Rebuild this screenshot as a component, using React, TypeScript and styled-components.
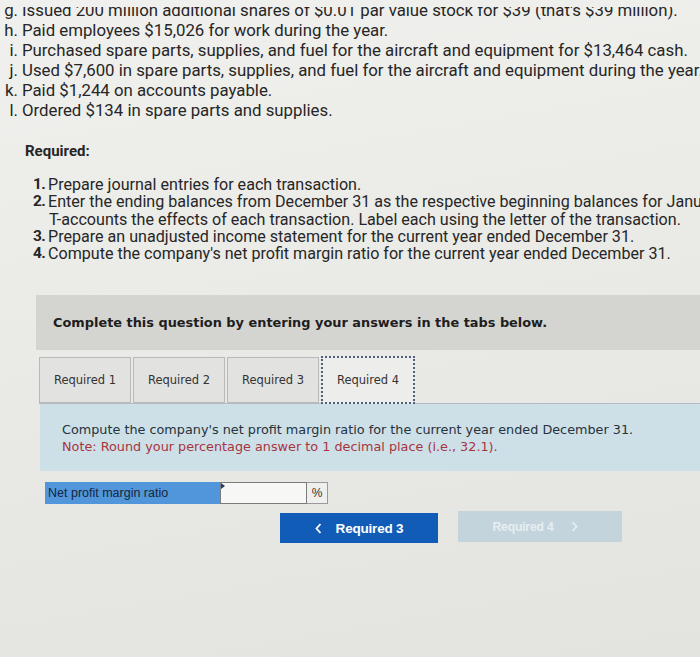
import React from "react";
import styled, { createGlobalStyle } from "styled-components";

const Global = createGlobalStyle`
  html, body { margin: 0; padding: 0; }
  body {
    width: 700px;
    height: 657px;
    overflow: hidden;
    background: linear-gradient(170deg, #f0f0ee 0%, #eaeae6 45%, #e3e3df 100%);
    font-family: Roboto, "Liberation Sans", sans-serif;
    color: #262626;
  }
`;

const Page = styled.div`
  display: flex;
  flex-direction: column;
  width: 700px;
  height: 657px;
  overflow: hidden;
`;

const Clip = styled.div`
  margin-top: 7px;
  overflow: hidden;
`;

const Transactions = styled.div`
  margin-top: -7px;
  display: flex;
  flex-direction: column;
  font-size: 16.8px;
  line-height: 20px;
  white-space: nowrap;
`;

const TLine = styled.div`
  display: flex;
`;

const TMark = styled.span`
  width: 18px;
  text-align: right;
  margin-right: 4px;
  flex: none;
`;

const Heading = styled.div`
  margin: 21px 0 0 25px;
  font-weight: 700;
  font-size: 15px;
  line-height: 20px;
`;

const Steps = styled.div`
  margin: 15px 0 0 33px;
  display: flex;
  flex-direction: column;
  font-size: 16.1px;
  line-height: 17.3px;
  white-space: nowrap;
`;

const Step = styled.div`
  display: flex;
`;

const StepMark = styled.span`
  width: 15px;
  font-weight: 700;
  font-size: 15.5px;
  letter-spacing: -0.6px;
  flex: none;
`;

const StepText = styled.span`
  display: flex;
  flex-direction: column;
`;

const Cont = styled.span`
  padding-left: 1px;
`;

const Banner = styled.div`
  margin: 33px 0 0 36px;
  height: 55px;
  background: #d4d4d1;
  display: flex;
  align-items: center;
  padding-left: 17px;
  font-family: "DejaVu Sans", Verdana, sans-serif;
  font-weight: 700;
  font-size: 12.9px;
  color: #1e1e1e;
`;

const TabRow = styled.div`
  margin: 5px 0 0 39px;
  display: flex;
  align-items: flex-end;
  height: 48px;
  border-bottom: 1px solid #b4bcc2;
`;

const Tab = styled.div<{ $active?: boolean }>`
  width: ${(p) => (p.$active ? 94 : 92)}px;
  height: ${(p) => (p.$active ? 48 : 46)}px;
  box-sizing: border-box;
  margin-right: 2px;
  display: flex;
  align-items: center;
  justify-content: center;
  font-family: "DejaVu Sans", Verdana, sans-serif;
  font-size: 11.5px;
  color: #333;
  background: ${(p) => (p.$active ? "#ededeb" : "#e2e2e0")};
  border: ${(p) => (p.$active ? "2px dotted #51607a" : "1px solid #b9b9b9")};
  margin-bottom: ${(p) => (p.$active ? -1 : 0)}px;
`;

const Panel = styled.div`
  margin-left: 40px;
  height: 67px;
  background: #cde0e8;
  padding: 18px 0 0 22px;
  box-sizing: border-box;
  font-family: "DejaVu Sans", Verdana, sans-serif;
  font-size: 12.8px;
  line-height: 16.5px;
  color: #26323c;
  white-space: nowrap;
`;

const Note = styled.div`
  color: #a8343f;
`;

const AnswerRow = styled.div`
  margin: 11px 0 0 45px;
  display: flex;
  height: 22px;
`;

const AnswerLabel = styled.div`
  width: 175px;
  background: #5196db;
  display: flex;
  align-items: center;
  padding-left: 3px;
  box-sizing: border-box;
  font-family: "Liberation Sans", Arial, sans-serif;
  font-size: 12.5px;
  color: #15263c;
`;

const AnswerInput = styled.div`
  position: relative;
  width: 87px;
  background: #f7f7f6;
  border: 1px solid #7b7b7b;
  box-sizing: border-box;
`;

const Caret = styled.span`
  position: absolute;
  left: 0;
  top: 0;
  width: 0;
  height: 0;
  border-top: 3px solid transparent;
  border-bottom: 3px solid transparent;
  border-left: 4px solid #1f3d6a;
`;

const Unit = styled.div`
  width: 21px;
  background: #efefed;
  border: 1px solid #9a9a9a;
  border-left: none;
  box-sizing: border-box;
  display: flex;
  align-items: center;
  justify-content: center;
  font-family: "Liberation Sans", Arial, sans-serif;
  font-size: 12px;
  color: #333;
`;

const NavRow = styled.div`
  margin: 9px 0 0 280px;
  display: flex;
  align-items: flex-start;
  gap: 20px;
`;

const NavButton = styled.div<{ $disabled?: boolean }>`
  width: ${(p) => (p.$disabled ? 164 : 158)}px;
  height: ${(p) => (p.$disabled ? 31 : 30)}px;
  margin-top: ${(p) => (p.$disabled ? -2 : 0)}px;
  background: ${(p) => (p.$disabled ? "#c3d4dd" : "#105cb6")};
  color: ${(p) => (p.$disabled ? "#e6eef2" : "#ffffff")};
  display: flex;
  align-items: center;
  justify-content: center;
  gap: ${(p) => (p.$disabled ? 17 : 14)}px;
  padding-right: ${(p) => (p.$disabled ? 10 : 0)}px;
  box-sizing: border-box;
  font-family: "Liberation Sans", Arial, sans-serif;
  font-weight: 700;
  font-size: ${(p) => (p.$disabled ? 12.2 : 13.5)}px;
  letter-spacing: -0.2px;
`;

const Chevron = ({ dir }: { dir: "left" | "right" }) => (
  <svg width="7" height="11" viewBox="0 0 7 11">
    <path
      d={dir === "left" ? "M5.5 1 L1.5 5.5 L5.5 10" : "M1.5 1 L5.5 5.5 L1.5 10"}
      stroke="currentColor"
      strokeWidth="1.8"
      fill="none"
    />
  </svg>
);

const transactions = [
  ["g.", "Issued 200 million additional shares of $0.01 par value stock for $39 (that's $39 million)."],
  ["h.", "Paid employees $15,026 for work during the year."],
  ["i.", "Purchased spare parts, supplies, and fuel for the aircraft and equipment for $13,464 cash."],
  ["j.", "Used $7,600 in spare parts, supplies, and fuel for the aircraft and equipment during the year."],
  ["k.", "Paid $1,244 on accounts payable."],
  ["l.", "Ordered $134 in spare parts and supplies."],
];

export default function App() {
  return (
    <Page>
      <Global />
      <Clip>
        <Transactions>
          {transactions.map(([m, t]) => (
            <TLine key={m}>
              <TMark>{m}</TMark>
              <span>{t}</span>
            </TLine>
          ))}
        </Transactions>
      </Clip>
      <Heading>Required:</Heading>
      <Steps>
        <Step>
          <StepMark>1.</StepMark>
          <StepText>Prepare journal entries for each transaction.</StepText>
        </Step>
        <Step>
          <StepMark>2.</StepMark>
          <StepText>
            <span>Enter the ending balances from December 31 as the respective beginning balances for January 1 in</span>
            <Cont>T-accounts the effects of each transaction. Label each using the letter of the transaction.</Cont>
          </StepText>
        </Step>
        <Step>
          <StepMark>3.</StepMark>
          <StepText>Prepare an unadjusted income statement for the current year ended December 31.</StepText>
        </Step>
        <Step>
          <StepMark>4.</StepMark>
          <StepText>Compute the company's net profit margin ratio for the current year ended December 31.</StepText>
        </Step>
      </Steps>
      <Banner>Complete this question by entering your answers in the tabs below.</Banner>
      <TabRow>
        <Tab>Required 1</Tab>
        <Tab>Required 2</Tab>
        <Tab>Required 3</Tab>
        <Tab $active>Required 4</Tab>
      </TabRow>
      <Panel>
        <div>Compute the company's net profit margin ratio for the current year ended December 31.</div>
        <Note>Note: Round your percentage answer to 1 decimal place (i.e., 32.1).</Note>
      </Panel>
      <AnswerRow>
        <AnswerLabel>Net profit margin ratio</AnswerLabel>
        <AnswerInput>
          <Caret />
        </AnswerInput>
        <Unit>%</Unit>
      </AnswerRow>
      <NavRow>
        <NavButton>
          <Chevron dir="left" />
          <span>Required 3</span>
        </NavButton>
        <NavButton $disabled>
          <span>Required 4</span>
          <Chevron dir="right" />
        </NavButton>
      </NavRow>
    </Page>
  );
}
